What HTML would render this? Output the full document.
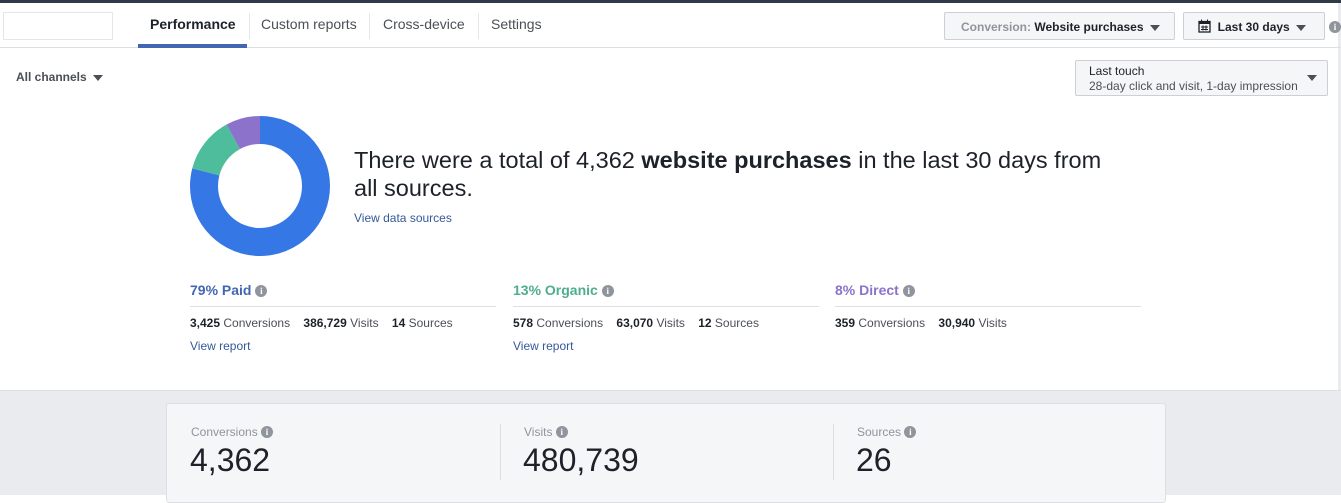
<!DOCTYPE html>
<html><head><style>
*{margin:0;padding:0;box-sizing:border-box}
body{width:1341px;height:495px;overflow:hidden;background:#fff;font-family:"Liberation Sans",Arial,sans-serif;color:#1d2129;position:relative}
.abs{position:absolute}
.topbar{left:0;top:0;width:1341px;height:3px;background:#2f3a48}
.nav{left:0;top:3px;width:1341px;height:45px;border-bottom:1px solid #dddfe2}
.tab{position:absolute;top:13px;font-size:14px;color:#4b4f56}
.sep{position:absolute;top:10px;width:1px;height:26px;background:#e5e6e9}
.btn{position:absolute;background:#f5f6f7;border:1px solid #ccd0d5;border-radius:2px;font-size:12px;font-weight:bold;color:#4b4f56}
.tri{display:inline-block;width:0;height:0;border-left:5px solid transparent;border-right:5px solid transparent;border-top:6px solid #4b4f56;vertical-align:middle}
.info{display:inline-block;width:12px;height:12px;border-radius:50%;background:#90949c;color:#fff;font-size:9px;font-weight:bold;text-align:center;line-height:12px;vertical-align:1px;font-family:"Liberation Serif",serif}
.ch{position:absolute;font-size:14px;font-weight:bold}
.line{position:absolute;height:1px;background:#dddfe2}
.stat{position:absolute;font-size:12px;color:#4b4f56}
.stat b{color:#1d2129}
.link{position:absolute;font-size:12px;color:#365899}
.gray{left:0;top:390px;width:1341px;height:105px;background:#e9ebee;border-top:1px solid #dddfe2}
.card{left:166px;top:403px;width:1000px;height:100px;background:#f5f6f7;border:1px solid #dddfe2;border-radius:3px}
.lbl{position:absolute;font-size:12px;color:#90949c}
.big{position:absolute;font-size:32px;color:#1d2129}
</style></head><body>
<div class="abs topbar"></div>
<div class="abs" style="left:1338px;top:3px;width:3px;height:387px;background:#e9ebee"></div>
<div class="abs nav">
 <div class="abs" style="left:3px;top:9px;width:110px;height:28px;border:1px solid #e5e6e9;background:#fff"></div>
 <div class="tab" style="left:150px;color:#1d2129;font-weight:bold">Performance</div>
 <div class="abs" style="left:138px;top:41px;width:109px;height:4px;background:#4267b2"></div>
 <div class="sep" style="left:249px"></div>
 <div class="tab" style="left:261px">Custom reports</div>
 <div class="sep" style="left:369px"></div>
 <div class="tab" style="left:383px">Cross-device</div>
 <div class="sep" style="left:478px"></div>
 <div class="tab" style="left:491px">Settings</div>
 <div class="btn" style="left:944px;top:9px;width:231px;height:28px;padding:7px 0 0 16px"><span style="color:#90949c">Conversion:</span> <span style="color:#1d2129">Website purchases</span> &nbsp;<span class="tri"></span></div>
 <div class="btn" style="left:1183px;top:9px;width:142px;height:28px;padding:6px 0 0 14px">
  <svg width="13" height="14" viewBox="0 0 13 14" style="vertical-align:-2px"><rect x="1" y="2.5" width="11" height="10.5" fill="none" stroke="#1d2129" stroke-width="1.3"/><rect x="1" y="2.5" width="11" height="2.5" fill="#1d2129"/><path d="M3.5 0.5v3M9.5 0.5v3M3 8h7M3 10.5h7M5 6.5v5M8 6.5v5" stroke="#1d2129" stroke-width="1"/></svg>
  &nbsp;<span style="color:#1d2129">Last 30 days</span> &nbsp;<span class="tri"></span></div>
 <div class="info" style="position:absolute;left:1329px;top:18px">i</div>
</div>
<div class="abs" style="left:16px;top:70px;font-size:12px;font-weight:bold;color:#4b4f56">All channels &nbsp;<span class="tri"></span></div>
<div class="btn" style="left:1075px;top:60px;width:253px;height:36px;padding:3px 0 0 13px;font-weight:normal">
 <div style="color:#1d2129">Last touch</div><div style="color:#4b4f56;font-size:12px;margin-top:1px">28-day click and visit, 1-day impression</div>
 <span class="tri" style="position:absolute;right:10px;top:14px"></span></div>
<svg class="abs" style="left:189px;top:115px" width="142" height="142" viewBox="0 0 142 142">
 <g transform="rotate(-90 71 71)" fill="none" stroke-width="28">
  <circle cx="71" cy="71" r="56" stroke="#3578e5" stroke-dasharray="277.9 351.9"/>
  <circle cx="71" cy="71" r="56" stroke="#4dbd9c" stroke-dasharray="45.7 351.9" stroke-dashoffset="-277.9"/>
  <circle cx="71" cy="71" r="56" stroke="#8c72cb" stroke-dasharray="28.3 351.9" stroke-dashoffset="-323.6"/>
 </g>
</svg>
<div class="abs" style="left:354px;top:146px;font-size:23.5px;line-height:28px;width:760px;color:#1d2129">There were a total of 4,362 <b>website purchases</b> in the last 30 days from all sources.</div>
<div class="link" style="left:354px;top:211px">View data sources</div>
<div class="ch" style="left:190px;top:282px;color:#4267b2">79% Paid <span class="info">i</span></div>
<div class="line" style="left:190px;top:306px;width:306px"></div>
<div class="stat" style="left:190px;top:316px"><b>3,425</b> Conversions &nbsp;&nbsp; <b>386,729</b> Visits &nbsp;&nbsp; <b>14</b> Sources</div>
<div class="link" style="left:190px;top:339px">View report</div>
<div class="ch" style="left:513px;top:282px;color:#4dae8f">13% Organic <span class="info">i</span></div>
<div class="line" style="left:513px;top:306px;width:306px"></div>
<div class="stat" style="left:513px;top:316px"><b>578</b> Conversions &nbsp;&nbsp; <b>63,070</b> Visits &nbsp;&nbsp; <b>12</b> Sources</div>
<div class="link" style="left:513px;top:339px">View report</div>
<div class="ch" style="left:835px;top:282px;color:#8c72cb">8% Direct <span class="info">i</span></div>
<div class="line" style="left:835px;top:306px;width:306px"></div>
<div class="stat" style="left:835px;top:316px"><b>359</b> Conversions &nbsp;&nbsp; <b>30,940</b> Visits</div>
<div class="abs gray"></div>
<div class="abs card">
 <div class="lbl" style="left:24px;top:21px">Conversions <span class="info">i</span></div>
 <div class="big" style="left:23px;top:38px">4,362</div>
 <div class="abs" style="left:333px;top:20px;width:1px;height:56px;background:#dddfe2"></div>
 <div class="lbl" style="left:357px;top:21px">Visits <span class="info">i</span></div>
 <div class="big" style="left:356px;top:38px">480,739</div>
 <div class="abs" style="left:666px;top:20px;width:1px;height:56px;background:#dddfe2"></div>
 <div class="lbl" style="left:690px;top:21px">Sources <span class="info">i</span></div>
 <div class="big" style="left:689px;top:38px">26</div>
</div>
</body></html>
